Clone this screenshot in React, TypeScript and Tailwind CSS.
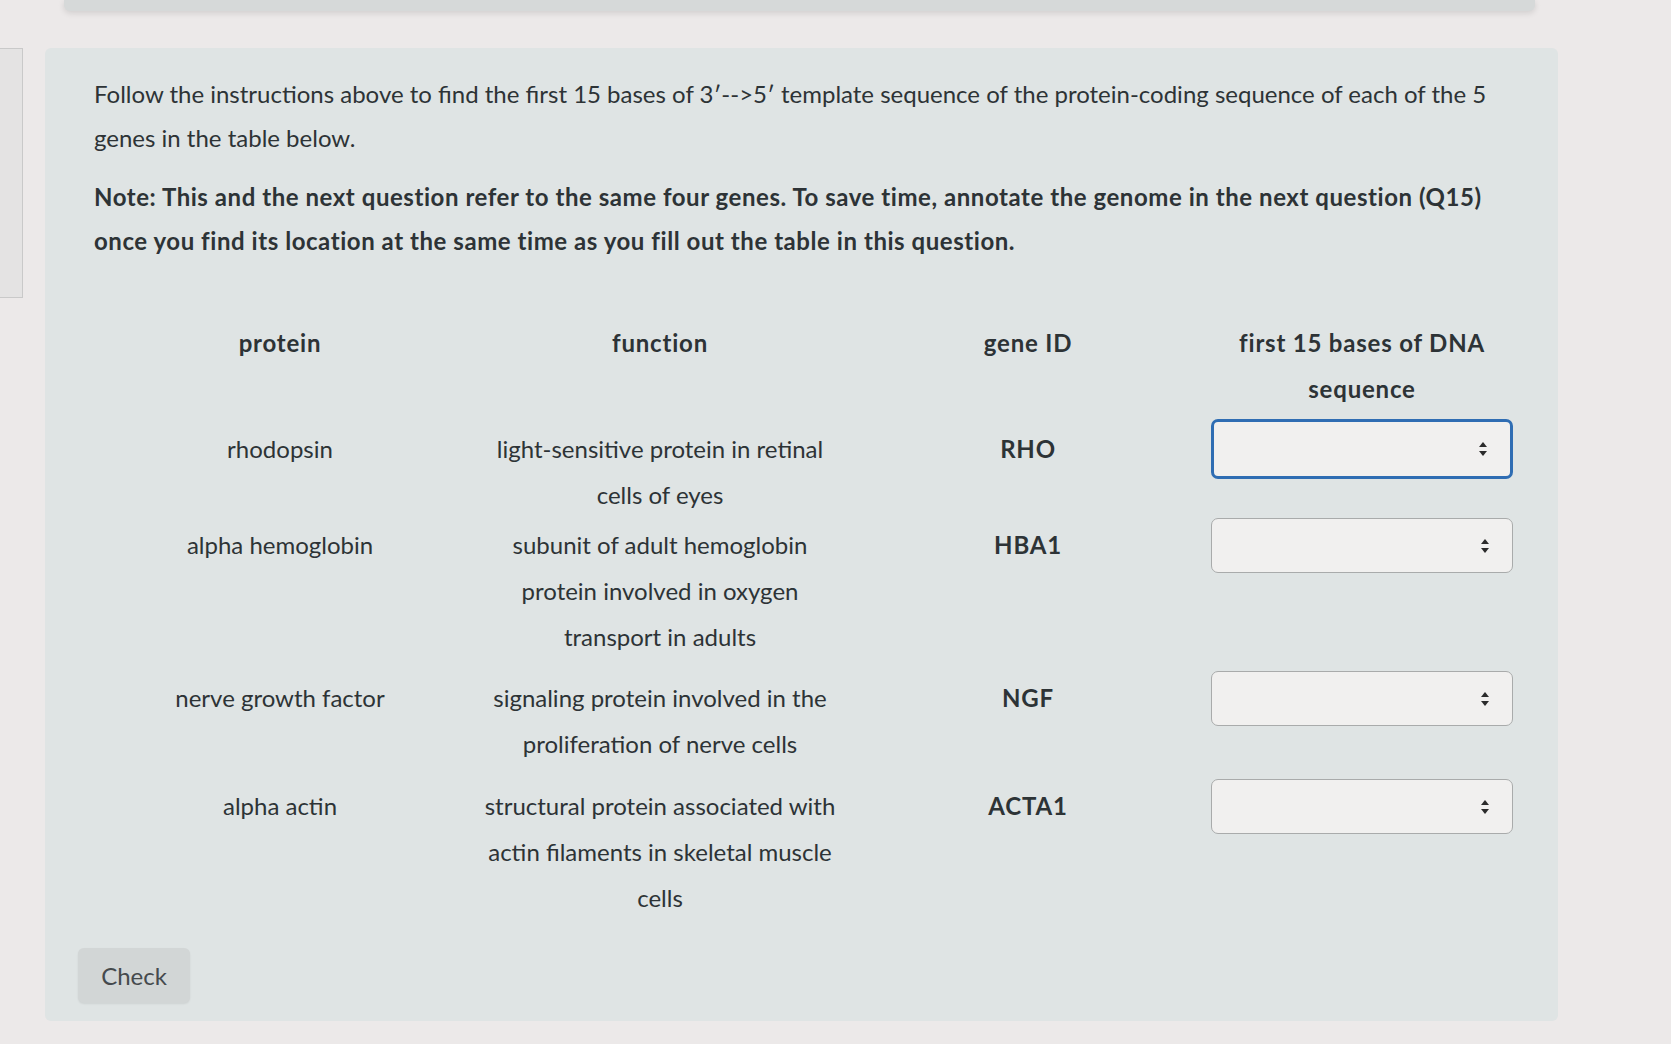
import { ReactNode } from "react"

const rows: { protein: string; fn: string[]; gene: string; focused?: boolean; gap: string }[] = [
  { protein: "rhodopsin", fn: ["light-sensitive protein in retinal", "cells of eyes"], gene: "RHO", focused: true, gap: "mt-[14px]" },
  { protein: "alpha hemoglobin", fn: ["subunit of adult hemoglobin", "protein involved in oxygen", "transport in adults"], gene: "HBA1", gap: "mt-[4px]" },
  { protein: "nerve growth factor", fn: ["signaling protein involved in the", "proliferation of nerve cells"], gene: "NGF", gap: "mt-[15px]" },
  { protein: "alpha actin", fn: ["structural protein associated with", "actin filaments in skeletal muscle", "cells"], gene: "ACTA1", gap: "mt-[16px]" },
]

function Arrows() {
  return (
    <svg width="10" height="16" viewBox="0 0 10 16" className="shrink-0">
      <path d="M5 1 L9 6 L1 6 Z" fill="#2b2b2b" />
      <path d="M5 15 L9 10 L1 10 Z" fill="#2b2b2b" />
    </svg>
  )
}

function Select({ focused }: { focused?: boolean }) {
  return (
    <div
      className={
        "flex w-[302px] items-center justify-end rounded-[7px] bg-[#f1f0ef] pr-[22px] " +
        (focused ? "h-[60px] border-[3px] border-[#2f6db3]" : "h-[55px] border border-[#a9abab]")
      }
    >
      <Arrows />
    </div>
  )
}

function Cell({ children, bold }: { children: ReactNode; bold?: boolean }) {
  return <div className={"text-center " + (bold ? "font-bold tracking-[0.8px]" : "")}>{children}</div>
}

export default function App() {
  return (
    <div className="relative min-h-[1044px] w-full overflow-hidden bg-[#ece9e9] text-[#2d3336]" style={{ fontFamily: "Lato, 'Noto Sans', sans-serif" }}>
      <div className="ml-[64px] h-[11px] w-[1471px] rounded-b-md bg-[#d6d9d9] shadow-[0_2px_6px_rgba(0,0,0,0.12)]" />
      <div className="absolute left-0 top-[48px] h-[250px] w-[23px] border border-l-0 border-[#c9c9c9] bg-[#e4e3e3]" />

      <div className="ml-[45px] mt-[37px] w-[1513px] rounded-md bg-[#dfe4e4] pb-[18px] pl-[49px] pr-[36px] pt-[24px] text-[24px] leading-[44px]">
        <p>
          Follow the instructions above to find the first 15 bases of 3′--&gt;5′ template sequence of the protein-coding sequence of each of the 5
          <br />
          genes in the table below.
        </p>
        <p className="mt-[15px] font-bold tracking-[0.55px]">
          Note: This and the next question refer to the same four genes. To save time, annotate the genome in the next question (Q15)
          <br />
          once you find its location at the same time as you fill out the table in this question.
        </p>

        <div className="mt-[57px] grid grid-cols-[372px_388px_348px_320px] leading-[46px]">
          <Cell bold>protein</Cell>
          <Cell bold>function</Cell>
          <Cell bold>gene ID</Cell>
          <Cell bold>
            first 15 bases of DNA
            <br />
            sequence
          </Cell>

          {rows.map((r) => (
            <div key={r.gene} className={"col-span-4 grid grid-cols-[372px_388px_348px_320px] " + r.gap}>
              <Cell>{r.protein}</Cell>
              <Cell>
                {r.fn.map((l) => (
                  <span key={l} className="block">{l}</span>
                ))}
              </Cell>
              <Cell bold>{r.gene}</Cell>
              <div className={"flex justify-center " + (r.focused ? "-mt-[7px]" : "-mt-[4px]")}>
                <Select focused={r.focused} />
              </div>
            </div>
          ))}
        </div>

        <button className="-ml-[16px] mt-[27px] h-[55px] w-[112px] rounded-md bg-[#d2d6d6] text-[24px] text-[#454a4d] shadow-[0_1px_2px_rgba(0,0,0,0.08)]">
          Check
        </button>
      </div>
    </div>
  )
}
